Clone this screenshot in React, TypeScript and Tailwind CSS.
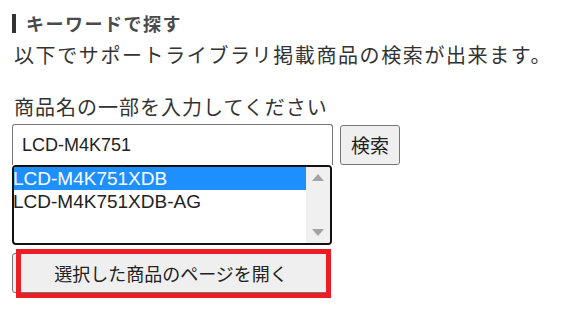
import React from 'react';

const options = ['LCD-M4K751XDB', 'LCD-M4K751XDB-AG'];

export default function App() {
  return (
    <div className="w-[572px] h-[309px] bg-white pl-3 pt-[12px] text-[#333] font-['Noto_Sans_CJK_JP',sans-serif]">
      {/* heading */}
      <h2 className="flex items-center gap-[10px] h-[22px] text-[18px] leading-[22px] font-bold text-[#4a4a4a] tracking-[1.5px]">
        <span className="block w-[4px] h-[19px] bg-[#333]" />
        キーワードで探す
      </h2>

      <p className="mt-[6px] pl-[2px] text-[20px] leading-[30px] tracking-[1.6px]">
        以下でサポートライブラリ掲載商品の検索が出来ます。
      </p>

      <p className="mt-[22px] pl-[2px] text-[20px] leading-[30px] tracking-[1px]">
        商品名の一部を入力してください
      </p>

      <div className="flex items-start gap-[7px] mt-[2px]">
        <div className="flex flex-col w-[321px]">
          <div className="h-[41px] border border-b-0 border-[#767676] rounded-t-[3px] pl-[9px] flex items-center text-[18px] text-[#222] font-['Liberation_Sans',sans-serif]">
            LCD-M4K751
          </div>
          {/* listbox */}
          <div className="flex h-[80px] w-[320px] border-2 border-[#111] rounded-[4px] overflow-hidden bg-white">
            <div className="flex-1 flex flex-col font-['Liberation_Sans',sans-serif] text-[19px] leading-[23px]">
              {options.map((o, i) => (
                <div
                  key={o}
                  className={
                    i === 0
                      ? 'h-[23px] bg-[#1e8fff] text-white -indent-[1px]'
                      : 'h-[23px] text-[#222] -indent-[1px]'
                  }
                >
                  {o}
                </div>
              ))}
            </div>
            <div className="w-[24px] bg-[#f0f0f0] flex flex-col justify-between items-center py-[7px]">
              <svg width="12" height="7" viewBox="0 0 12 7">
                <polygon points="6,0 12,7 0,7" fill="#a3a3a3" />
              </svg>
              <svg width="12" height="7" viewBox="0 0 12 7">
                <polygon points="0,0 12,0 6,7" fill="#a3a3a3" />
              </svg>
            </div>
          </div>
        </div>
        <button className="mt-[1px] w-[60px] h-[40px] bg-[#efefef] border border-[#767676] rounded-[3px] text-[19px] text-[#222]">
          検索
        </button>
      </div>

      <div className="relative mt-[8px] w-[318px]">
        <button className="w-[318px] h-[40px] bg-[#efefef] border border-[#767676] rounded-[3px] text-[18px] text-[#222]">
          選択した商品のページを開く
        </button>
        <div className="absolute left-[4px] top-[-4px] w-[315px] h-[49px] border-[5px] border-[#ee1c25] pointer-events-none" />
      </div>
    </div>
  );
}
